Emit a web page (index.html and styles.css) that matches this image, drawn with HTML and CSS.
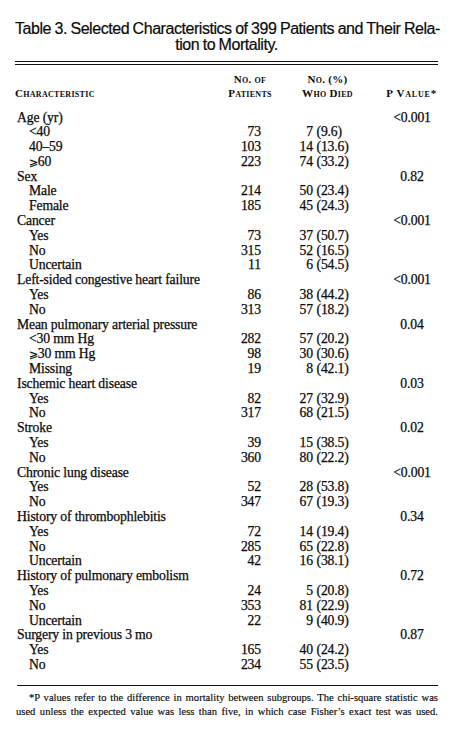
FILE: index.html
```html
<!DOCTYPE html>
<html>
<head>
<meta charset="utf-8">
<title>Table 3</title>
<link rel="stylesheet" href="styles.css">
</head>
<body>
<div class="page">
  <h1 class="title">Table 3. Selected Characteristics of 399 Patients and Their Rela-<br>tion to Mortality.</h1>
  <div class="double-rule"></div>
  <div class="head">
    <div class="h-char">Characteristic</div>
    <div class="h-pat">No. of<br>Patients</div>
    <div class="h-died">No. (%)<br>Who Died</div>
    <div class="h-p">P Value*</div>
  </div>
  <div class="body">
    <div class="row"><div class="lab">Age (yr)</div><div class="n"></div><div class="c"></div><div class="pc"></div><div class="p">&lt;0.001</div></div>
    <div class="row"><div class="lab sub">&lt;40</div><div class="n">73</div><div class="c">7</div><div class="pc">(9.6)</div><div class="p"></div></div>
    <div class="row"><div class="lab sub">40–59</div><div class="n">103</div><div class="c">14</div><div class="pc">(13.6)</div><div class="p"></div></div>
    <div class="row"><div class="lab sub"><span class="ge">⩾</span>60</div><div class="n">223</div><div class="c">74</div><div class="pc">(33.2)</div><div class="p"></div></div>
    <div class="row"><div class="lab">Sex</div><div class="n"></div><div class="c"></div><div class="pc"></div><div class="p">0.82</div></div>
    <div class="row"><div class="lab sub">Male</div><div class="n">214</div><div class="c">50</div><div class="pc">(23.4)</div><div class="p"></div></div>
    <div class="row"><div class="lab sub">Female</div><div class="n">185</div><div class="c">45</div><div class="pc">(24.3)</div><div class="p"></div></div>
    <div class="row"><div class="lab">Cancer</div><div class="n"></div><div class="c"></div><div class="pc"></div><div class="p">&lt;0.001</div></div>
    <div class="row"><div class="lab sub">Yes</div><div class="n">73</div><div class="c">37</div><div class="pc">(50.7)</div><div class="p"></div></div>
    <div class="row"><div class="lab sub">No</div><div class="n">315</div><div class="c">52</div><div class="pc">(16.5)</div><div class="p"></div></div>
    <div class="row"><div class="lab sub">Uncertain</div><div class="n">11</div><div class="c">6</div><div class="pc">(54.5)</div><div class="p"></div></div>
    <div class="row"><div class="lab">Left-sided congestive heart failure</div><div class="n"></div><div class="c"></div><div class="pc"></div><div class="p">&lt;0.001</div></div>
    <div class="row"><div class="lab sub">Yes</div><div class="n">86</div><div class="c">38</div><div class="pc">(44.2)</div><div class="p"></div></div>
    <div class="row"><div class="lab sub">No</div><div class="n">313</div><div class="c">57</div><div class="pc">(18.2)</div><div class="p"></div></div>
    <div class="row"><div class="lab">Mean pulmonary arterial pressure</div><div class="n"></div><div class="c"></div><div class="pc"></div><div class="p">0.04</div></div>
    <div class="row"><div class="lab sub">&lt;30 mm Hg</div><div class="n">282</div><div class="c">57</div><div class="pc">(20.2)</div><div class="p"></div></div>
    <div class="row"><div class="lab sub"><span class="ge">⩾</span>30 mm Hg</div><div class="n">98</div><div class="c">30</div><div class="pc">(30.6)</div><div class="p"></div></div>
    <div class="row"><div class="lab sub">Missing</div><div class="n">19</div><div class="c">8</div><div class="pc">(42.1)</div><div class="p"></div></div>
    <div class="row"><div class="lab">Ischemic heart disease</div><div class="n"></div><div class="c"></div><div class="pc"></div><div class="p">0.03</div></div>
    <div class="row"><div class="lab sub">Yes</div><div class="n">82</div><div class="c">27</div><div class="pc">(32.9)</div><div class="p"></div></div>
    <div class="row"><div class="lab sub">No</div><div class="n">317</div><div class="c">68</div><div class="pc">(21.5)</div><div class="p"></div></div>
    <div class="row"><div class="lab">Stroke</div><div class="n"></div><div class="c"></div><div class="pc"></div><div class="p">0.02</div></div>
    <div class="row"><div class="lab sub">Yes</div><div class="n">39</div><div class="c">15</div><div class="pc">(38.5)</div><div class="p"></div></div>
    <div class="row"><div class="lab sub">No</div><div class="n">360</div><div class="c">80</div><div class="pc">(22.2)</div><div class="p"></div></div>
    <div class="row"><div class="lab">Chronic lung disease</div><div class="n"></div><div class="c"></div><div class="pc"></div><div class="p">&lt;0.001</div></div>
    <div class="row"><div class="lab sub">Yes</div><div class="n">52</div><div class="c">28</div><div class="pc">(53.8)</div><div class="p"></div></div>
    <div class="row"><div class="lab sub">No</div><div class="n">347</div><div class="c">67</div><div class="pc">(19.3)</div><div class="p"></div></div>
    <div class="row"><div class="lab">History of thrombophlebitis</div><div class="n"></div><div class="c"></div><div class="pc"></div><div class="p">0.34</div></div>
    <div class="row"><div class="lab sub">Yes</div><div class="n">72</div><div class="c">14</div><div class="pc">(19.4)</div><div class="p"></div></div>
    <div class="row"><div class="lab sub">No</div><div class="n">285</div><div class="c">65</div><div class="pc">(22.8)</div><div class="p"></div></div>
    <div class="row"><div class="lab sub">Uncertain</div><div class="n">42</div><div class="c">16</div><div class="pc">(38.1)</div><div class="p"></div></div>
    <div class="row"><div class="lab">History of pulmonary embolism</div><div class="n"></div><div class="c"></div><div class="pc"></div><div class="p">0.72</div></div>
    <div class="row"><div class="lab sub">Yes</div><div class="n">24</div><div class="c">5</div><div class="pc">(20.8)</div><div class="p"></div></div>
    <div class="row"><div class="lab sub">No</div><div class="n">353</div><div class="c">81</div><div class="pc">(22.9)</div><div class="p"></div></div>
    <div class="row"><div class="lab sub">Uncertain</div><div class="n">22</div><div class="c">9</div><div class="pc">(40.9)</div><div class="p"></div></div>
    <div class="row"><div class="lab">Surgery in previous 3 mo</div><div class="n"></div><div class="c"></div><div class="pc"></div><div class="p">0.87</div></div>
    <div class="row"><div class="lab sub">Yes</div><div class="n">165</div><div class="c">40</div><div class="pc">(24.2)</div><div class="p"></div></div>
    <div class="row"><div class="lab sub">No</div><div class="n">234</div><div class="c">55</div><div class="pc">(23.5)</div><div class="p"></div></div>
  </div>
  <div class="end-rule"></div>
  <p class="note">*P values refer to the difference in mortality between subgroups. The chi-square statistic was<br>used unless the expected value was less than five, in which case Fisher’s exact test was used.</p>
</div>
</body>
</html>
```

FILE: styles.css
```css
html, body {
  margin: 0;
  padding: 0;
  background: #ffffff;
}

body {
  color: #0a0a0a;
  font-family: "Liberation Serif", "Times New Roman", serif;
}

.page {
  width: 423px;
  margin-left: 15px;
  padding-top: 21px;
}

.title {
  margin: 0;
  font-family: "Liberation Sans", Arial, sans-serif;
  font-weight: normal;
  font-size: 16px;
  line-height: 16px;
  letter-spacing: -0.45px;
  word-spacing: -0.5px;
  white-space: nowrap;
  text-align: center;
  color: #0a0a0a;
  -webkit-text-stroke: 0.2px #0a0a0a;
}

.double-rule {
  margin-top: 8px;
  height: 1.5px;
  border-top: 1.5px solid #111;
  border-bottom: 1.5px solid #111;
}

.head {
  margin-top: 7px;
  display: grid;
  grid-template-columns: 210px 50px 105px 58px;
  align-items: end;
  font-size: 11px;
  line-height: 14px;
  font-variant: small-caps;
  font-weight: bold;
  letter-spacing: 0.3px;
}

.h-char { text-align: left; }
.h-pat { text-align: center; }
.h-died { text-align: center; }
.h-p { text-align: right; padding-right: 1px; letter-spacing: 0.8px; }

.body {
  margin-top: 11px;
  font-size: 13.7px;
  line-height: 14.8px;
  letter-spacing: -0.15px;
  -webkit-text-stroke: 0.25px #0a0a0a;
}

.row {
  display: grid;
  grid-template-columns: 200px 46px 52px 73px 52px;
  height: 14.8px;
}

.lab {
  white-space: nowrap;
  padding-left: 2px;
}

.lab.sub {
  padding-left: 14px;
}

.ge {
  font-family: "DejaVu Serif", serif;
  font-size: 11px;
}

.n { text-align: right; }
.c { text-align: right; }
.pc { text-align: left; padding-left: 3.5px; white-space: nowrap; }
.p { text-align: center; }

.end-rule {
  margin-top: 12px;
  margin-left: 2px;
  border-top: 1.5px solid #111;
}

.note {
  margin: 5px 0 0 1px;
  font-size: 10.6px;
  line-height: 14px;
  white-space: nowrap;
  text-align: justify;
  text-align-last: justify;
  text-indent: 13px;
  -webkit-text-stroke: 0.15px #0a0a0a;
}
```
